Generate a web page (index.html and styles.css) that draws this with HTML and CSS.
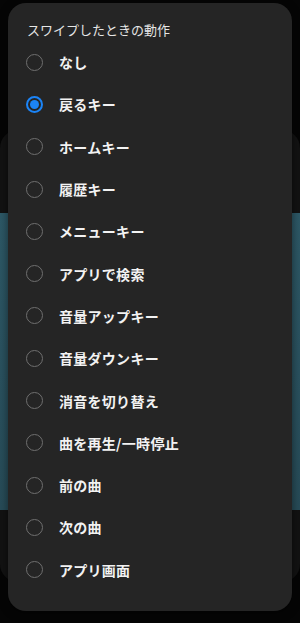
FILE: index.html
```html
<!DOCTYPE html>
<html lang="ja">
<head>
    <meta charset="UTF-8" />
    <meta name="viewport" content="width=device-width, initial-scale=1" />
    <title>スワイプしたときの動作</title>
    <link rel="stylesheet" href="styles.css">
</head>
<body>
    <div class="fondo" aria-hidden="true">
        <div class="fondo-tarjeta arriba"></div>
        <div class="fondo-panel izquierda"></div>
        <div class="fondo-panel derecha"></div>
        <div class="fondo-tarjeta abajo"></div>
    </div>

    <section class="dialogo" role="dialog" aria-labelledby="titulo">
        <h1 class="titulo" id="titulo">スワイプしたときの動作</h1>
        <ul class="opciones" role="radiogroup">
            <li class="opcion"><span class="radio"></span><span class="etiqueta">なし</span></li>
            <li class="opcion activa"><span class="radio"></span><span class="etiqueta">戻るキー</span></li>
            <li class="opcion"><span class="radio"></span><span class="etiqueta">ホームキー</span></li>
            <li class="opcion"><span class="radio"></span><span class="etiqueta">履歴キー</span></li>
            <li class="opcion"><span class="radio"></span><span class="etiqueta">メニューキー</span></li>
            <li class="opcion"><span class="radio"></span><span class="etiqueta">アプリで検索</span></li>
            <li class="opcion"><span class="radio"></span><span class="etiqueta">音量アップキー</span></li>
            <li class="opcion"><span class="radio"></span><span class="etiqueta">音量ダウンキー</span></li>
            <li class="opcion"><span class="radio"></span><span class="etiqueta">消音を切り替え</span></li>
            <li class="opcion"><span class="radio"></span><span class="etiqueta">曲を再生/一時停止</span></li>
            <li class="opcion"><span class="radio"></span><span class="etiqueta">前の曲</span></li>
            <li class="opcion"><span class="radio"></span><span class="etiqueta">次の曲</span></li>
            <li class="opcion"><span class="radio"></span><span class="etiqueta">アプリ画面</span></li>
        </ul>
    </section>
</body>
</html>
```

FILE: styles.css
```css
/* Variables */
:root {
    --color-fondo: #050505;
    --color-dialogo: #252525;
    --color-texto: #f2f2f2;
    --color-titulo: #e6e6e6;
    --color-radio: #6f6f6f;
    --color-acento: #1b84f7;
    --font-family: 'Noto Sans CJK JP', 'Noto Sans', sans-serif;
}

*, *::before, *::after {
    box-sizing: border-box;
    margin: 0;
    padding: 0;
}

body {
    font-family: var(--font-family);
    background-color: var(--color-fondo);
    color: var(--color-texto);
    width: 300px;
    height: 623px;
    overflow: hidden;
    position: relative;
    padding-top: 3px;
}

/* Contenido atenuado detrás del diálogo */
.fondo {
    position: absolute;
    inset: 0;
}

.fondo-tarjeta {
    position: absolute;
    left: 0;
    right: 0;
    background: #121212;
}

.fondo-tarjeta.arriba {
    top: 130px;
    height: 83px;
    border-radius: 18px 18px 0 0;
}

.fondo-tarjeta.abajo {
    top: 510px;
    height: 72px;
    border-radius: 0 0 18px 18px;
}

.fondo-panel {
    position: absolute;
    top: 213px;
    height: 297px;
    width: 15px;
    background: linear-gradient(180deg, #2d5866, #274b57);
}

.fondo-panel.izquierda { left: 0; }
.fondo-panel.derecha { right: 0; }

/* Diálogo */
.dialogo {
    position: relative;
    margin-left: 8px;
    width: 284px;
    height: 608px;
    background-color: var(--color-dialogo);
    border-radius: 18px;
    padding-top: 17px;
    box-shadow: 0 2px 8px rgba(0, 0, 0, 0.5);
}

.titulo {
    font-size: 13px;
    font-weight: 400;
    line-height: 19px;
    color: var(--color-titulo);
    padding-left: 19px;
    margin-bottom: 2px;
}

.opciones {
    list-style: none;
}

.opcion {
    height: 42.3px;
    display: flex;
    align-items: center;
    padding-left: 18px;
}

.radio {
    width: 17px;
    height: 17px;
    border: 1.5px solid var(--color-radio);
    border-radius: 50%;
    flex-shrink: 0;
    display: flex;
    align-items: center;
    justify-content: center;
}

.opcion.activa .radio {
    border: 2px solid var(--color-acento);
}

.opcion.activa .radio::after {
    content: '';
    width: 9px;
    height: 9px;
    border-radius: 50%;
    background: var(--color-acento);
}

.etiqueta {
    margin-left: 16px;
    font-size: 14px;
    font-weight: 700;
    line-height: 20px;
    letter-spacing: 0.02em;
}
```
